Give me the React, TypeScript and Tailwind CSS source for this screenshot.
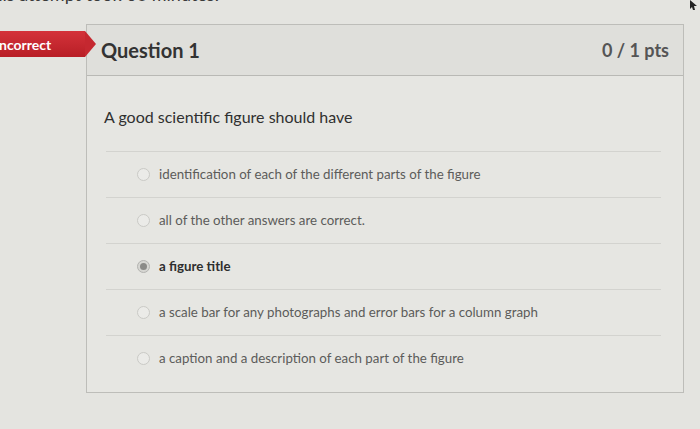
import React from "react";

interface IAnswer {
  text: string;
  selected?: boolean;
}

const answers: IAnswer[] = [
  { text: "identification of each of the different parts of the figure" },
  { text: "all of the other answers are correct." },
  { text: "a figure title", selected: true },
  { text: "a scale bar for any photographs and error bars for a column graph" },
  { text: "a caption and a description of each part of the figure" },
];

const Radio: React.FC<{ checked?: boolean }> = ({ checked }) => (
  <span
    className={`flex h-[13px] w-[13px] flex-none items-center justify-center rounded-full border ${
      checked ? "border-[#b3b3b0] bg-[#d6d6d2]" : "border-[#cacac6] bg-[#ebebe8]"
    }`}
  >
    {checked && <span className="h-[7px] w-[7px] rounded-full bg-[#8a8a87]" />}
  </span>
);

const AnswerRow: React.FC<IAnswer> = ({ text, selected }) => (
  <div className="flex h-[46px] items-center border-t border-[#d3d3cf] pl-[31px]">
    <Radio checked={selected} />
    <span
      className={`ml-[9px] text-[13.3px] ${
        selected ? "font-bold text-[#2e2e2e]" : "text-[#5c5c5a]"
      }`}
    >
      {text}
    </span>
  </div>
);

export default function App() {
  return (
    <div className="relative h-[429px] w-[700px] overflow-hidden bg-[#e4e4e0] font-['Lato','Liberation_Sans',sans-serif]">
      <div className="-mt-[18px] ml-[-18px] h-[24px] text-[18px] leading-[24px] text-[#3a3a3a]">
        This attempt took 60 minutes.
      </div>

      <div className="mt-[18px] flex items-start">
        <div className="relative z-10 mt-[7px] flex h-[26px] w-[96px] flex-none items-center overflow-hidden">
          <div className="flex h-full w-[85px] items-center bg-gradient-to-b from-[#d4323a] to-[#b81e26]">
            <span className="-ml-[5px] text-[14px] font-bold text-white">Incorrect</span>
          </div>
          <div className="h-0 w-0 border-y-[13px] border-l-[11px] border-y-transparent border-l-[#c52830]" />
        </div>

        <div className="-ml-[10px] h-[369px] w-[598px] border border-[#bdbdb9] bg-[#e6e6e2]">
          <div className="flex h-[51px] items-center justify-between border-b border-[#b9b9b5] bg-[#dfdfdb] pl-[14px] pr-[14px]">
            <span className="text-[20px] font-bold text-[#333333]">Question 1</span>
            <span className="text-[18px] font-bold text-[#555555]">0 / 1 pts</span>
          </div>

          <div className="pl-[17px] pr-[22px] pt-[30px]">
            <p className="h-[22px] text-[16px] leading-[22px] text-[#303030]">
              A good scientific figure should have
            </p>
            <div className="mt-[23px] ml-[2px]">
              {answers.map((a) => (
                <AnswerRow key={a.text} {...a} />
              ))}
            </div>
          </div>
        </div>
      </div>

      <svg
        className="absolute right-[2px] top-0"
        width="9"
        height="10"
        viewBox="0 0 9 10"
      >
        <path d="M1 0 L8 6 L5 6 L6 10 L4 10 L3 7 L1 9 Z" fill="#222" />
      </svg>
    </div>
  );
}
